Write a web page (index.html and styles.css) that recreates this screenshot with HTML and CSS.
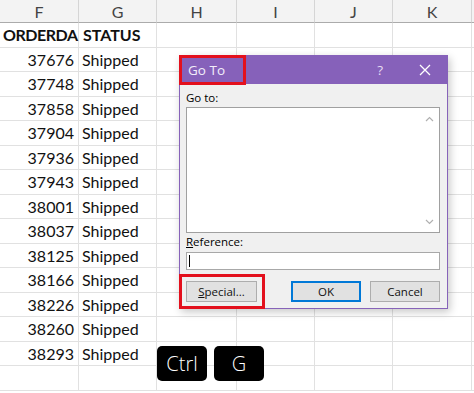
FILE: index.html
```html
<!DOCTYPE html>
<html>
<head>
<meta charset="utf-8">
<link rel="stylesheet" href="styles.css">
</head>
<body>
<div class="sheet">
  <div class="grid">
    <div class="ch">F</div><div class="ch">G</div><div class="ch">H</div><div class="ch">I</div><div class="ch">J</div><div class="ch">K</div><div class="ch last"></div>

    <div class="c b tight">ORDERDA</div><div class="c b">STATUS</div><div class="c"></div><div class="c"></div><div class="c"></div><div class="c"></div><div class="c last"></div>
    <div class="c num">37676</div><div class="c">Shipped</div><div class="c"></div><div class="c"></div><div class="c"></div><div class="c"></div><div class="c last"></div>
    <div class="c num">37748</div><div class="c">Shipped</div><div class="c"></div><div class="c"></div><div class="c"></div><div class="c"></div><div class="c last"></div>
    <div class="c num">37858</div><div class="c">Shipped</div><div class="c"></div><div class="c"></div><div class="c"></div><div class="c"></div><div class="c last"></div>
    <div class="c num">37904</div><div class="c">Shipped</div><div class="c"></div><div class="c"></div><div class="c"></div><div class="c"></div><div class="c last"></div>
    <div class="c num">37936</div><div class="c">Shipped</div><div class="c"></div><div class="c"></div><div class="c"></div><div class="c"></div><div class="c last"></div>
    <div class="c num">37943</div><div class="c">Shipped</div><div class="c"></div><div class="c"></div><div class="c"></div><div class="c"></div><div class="c last"></div>
    <div class="c num">38001</div><div class="c">Shipped</div><div class="c"></div><div class="c"></div><div class="c"></div><div class="c"></div><div class="c last"></div>
    <div class="c num">38037</div><div class="c">Shipped</div><div class="c"></div><div class="c"></div><div class="c"></div><div class="c"></div><div class="c last"></div>
    <div class="c num">38125</div><div class="c">Shipped</div><div class="c"></div><div class="c"></div><div class="c"></div><div class="c"></div><div class="c last"></div>
    <div class="c num">38166</div><div class="c">Shipped</div><div class="c"></div><div class="c"></div><div class="c"></div><div class="c"></div><div class="c last"></div>
    <div class="c num">38226</div><div class="c">Shipped</div><div class="c"></div><div class="c"></div><div class="c"></div><div class="c"></div><div class="c last"></div>
    <div class="c num">38260</div><div class="c">Shipped</div><div class="c"></div><div class="c"></div><div class="c"></div><div class="c"></div><div class="c last"></div>
    <div class="c num">38293</div><div class="c">Shipped</div><div class="c"></div><div class="c"></div><div class="c"></div><div class="c"></div><div class="c last"></div>
    <div class="c"></div><div class="c"></div><div class="c"></div><div class="c"></div><div class="c"></div><div class="c"></div><div class="c last"></div>
  </div>

  <div class="dialog">
    <div class="titlebar">
      <span class="title">Go To</span>
      <span class="help">?</span>
      <svg class="close" width="12" height="12" viewBox="0 0 12 12"><path d="M1 1 L11 11 M11 1 L1 11" stroke="#fff" stroke-width="1.3" fill="none"/></svg>
    </div>
    <div class="body">
      <div class="label">Go to:</div>
      <div class="list">
        <svg class="arr up" width="9" height="6" viewBox="0 0 9 6"><path d="M1 5 L4.5 1.5 L8 5" stroke="#b0b0b0" stroke-width="1.2" fill="none"/></svg>
        <svg class="arr down" width="9" height="6" viewBox="0 0 9 6"><path d="M1 1 L4.5 4.5 L8 1" stroke="#b0b0b0" stroke-width="1.2" fill="none"/></svg>
      </div>
      <div class="label ref"><u>R</u>eference:</div>
      <div class="input"><span class="caret"></span></div>
      <div class="buttons">
        <div class="btn"><u>S</u>pecial...</div>
        <div class="btngroup">
          <div class="btn ok">OK</div>
          <div class="btn">Cancel</div>
        </div>
      </div>
    </div>
  </div>

  <div class="mark mark-title"></div>
  <div class="mark mark-special"></div>

  <div class="key key-ctrl">Ctrl</div>
  <div class="key key-g">G</div>
</div>
</body>
</html>
```

FILE: styles.css
```css
html, body {
  margin: 0;
  padding: 0;
  background: #fff;
}
.sheet {
  position: relative;
  width: 474px;
  height: 393px;
  overflow: hidden;
  font-family: Lato, "Open Sans", sans-serif;
}
.grid {
  display: grid;
  grid-template-columns: 79px 78px 80px 78px 78px 79px 1fr;
  grid-template-rows: 23px repeat(15, 24.5px);
}
.ch {
  background: #f3f3f3;
  border-right: 1px solid #d5d5d5;
  border-bottom: 1px solid #ababab;
  display: flex;
  align-items: center;
  justify-content: center;
  font-size: 16px;
  color: #444;
  box-sizing: border-box;
}
.c {
  border-right: 1px solid #e1e1e1;
  border-bottom: 1px solid #e1e1e1;
  box-sizing: border-box;
  display: flex;
  align-items: center;
  padding: 0 3px;
  font-size: 16px;
  color: #111;
  white-space: nowrap;
}
.c.num {
  justify-content: flex-end;
  padding-right: 4px;
}
.c.b {
  font-weight: 700;
  justify-content: flex-start;
  padding-left: 4px;
}
.c.tight {
  padding-left: 3px;
  letter-spacing: -0.45px;
}
.last {
  border-right: none;
}

.dialog {
  position: absolute;
  left: 179px;
  top: 55px;
  width: 269px;
  height: 254px;
  box-sizing: border-box;
  border: 1px solid #8763b9;
  border-top: none;
  background: #f0f0f0;
  box-shadow: 2px 3px 8px rgba(0,0,0,0.22);
  font-family: "Open Sans", sans-serif;
  font-size: 11.5px;
  color: #111;
  display: flex;
  flex-direction: column;
}
.titlebar {
  height: 29px;
  margin: 0 -1px;
  background: #8661ba;
  display: flex;
  align-items: center;
  color: #fff;
  padding: 0 0 0 9px;
}
.title {
  font-size: 13.5px;
  color: #f2eefa;
  flex: 1;
}
.help {
  font-size: 13.5px;
  color: #e6ddf3;
  margin-right: 36px;
}
.close {
  margin-right: 17px;
}
.body {
  padding: 7px 7px 0 6px;
  display: flex;
  flex-direction: column;
}
.label {
  height: 14px;
  line-height: 14px;
  color: #000;
}
.label.ref {
  margin-top: 2px;
}
.label u {
  text-decoration-thickness: 1px;
}
.list {
  margin-top: 2px;
  height: 126px;
  background: #fff;
  border: 1px solid #a0a0a0;
  box-sizing: border-box;
  position: relative;
}
.arr {
  position: absolute;
  right: 5px;
}
.arr.up { top: 8px; }
.arr.down { bottom: 7px; }
.input {
  margin-top: 3px;
  height: 18px;
  background: #fff;
  border: 1px solid #a8a8a8;
  box-sizing: border-box;
  display: flex;
  align-items: center;
  padding-left: 2px;
}
.caret {
  width: 1px;
  height: 12px;
  background: #000;
}
.buttons {
  margin-top: 11px;
  display: flex;
  justify-content: space-between;
}
.btngroup {
  display: flex;
  gap: 9px;
}
.btn {
  width: 71px;
  height: 21px;
  box-sizing: border-box;
  border: 1px solid #adadad;
  background: #e1e1e1;
  display: flex;
  align-items: center;
  justify-content: center;
  font-size: 11.5px;
}
.btn.ok {
  border: 2px solid #0078d7;
  width: 70px;
}
.btngroup .btn {
  width: 70px;
}
.btn u {
  text-decoration-thickness: 1px;
}

.mark {
  position: absolute;
  border: 3px solid #e3101d;
  box-sizing: border-box;
}
.mark-title {
  left: 179px;
  top: 55px;
  width: 67px;
  height: 30px;
}
.mark-special {
  left: 179px;
  top: 274px;
  width: 86px;
  height: 35px;
}

.key {
  position: absolute;
  top: 346px;
  height: 35px;
  background: #000;
  border-radius: 5px;
  color: #fff;
  display: flex;
  align-items: center;
  justify-content: center;
  font-family: "Open Sans", sans-serif;
  font-weight: 300;
  font-size: 20px;
}
.key-ctrl {
  left: 157px;
  width: 50px;
}
.key-g {
  left: 214px;
  width: 50px;
}
```
